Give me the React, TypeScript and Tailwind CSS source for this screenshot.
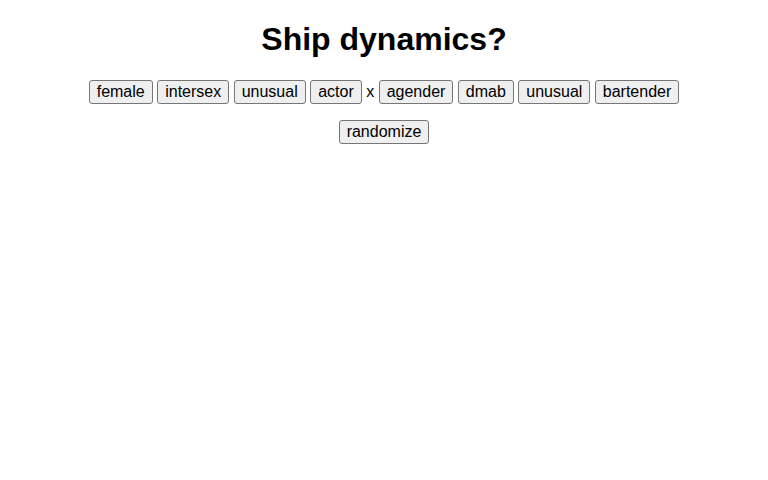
import React from "react";

const left = ["female", "intersex", "unusual", "actor"];
const right = ["agender", "dmab", "unusual", "bartender"];

function Btn({ children }: { children: React.ReactNode }) {
  return (
    <button className="inline-block border border-solid border-[#767676] rounded-[3px] bg-[#efefef] px-[7px] py-[2px] text-[16px] leading-[normal] text-black align-baseline">
      {children}
    </button>
  );
}

export default function App() {
  return (
    <div className="bg-white text-black text-center text-[16px] leading-[normal] min-h-[480px] px-2 pt-px" style={{ fontFamily: '"Liberation Sans", Arial, sans-serif' }}>
      <h1 className="text-[32px] font-bold leading-[normal] mt-[20.44px] mb-[21.44px]">Ship dynamics?</h1>
      <p className="mb-4">
        {left.map((w, i) => (
          <React.Fragment key={"l" + i}>
            <Btn>{w}</Btn>{" "}
          </React.Fragment>
        ))}
        x{" "}
        {right.map((w, i) => (
          <React.Fragment key={"r" + i}>
            <Btn>{w}</Btn>
            {i < right.length - 1 ? " " : ""}
          </React.Fragment>
        ))}
      </p>
      <p>
        <Btn>randomize</Btn>
      </p>
    </div>
  );
}
